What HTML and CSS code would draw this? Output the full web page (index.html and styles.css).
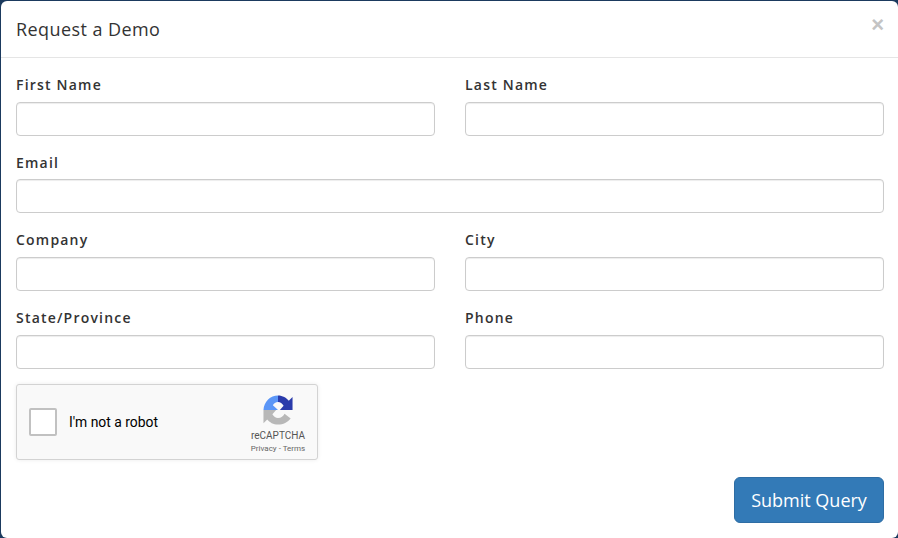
FILE: index.html
```html
<!DOCTYPE html>
<html lang="en">
<head>
    <meta charset="UTF-8">
    <meta name="viewport" content="width=device-width, initial-scale=1.0">
    <title>Request a Demo</title>
    <link rel="stylesheet" href="styles.css">
</head>
<body>
    <div class="modal">
        <div class="modal-header">
            <h4 class="modal-title">Request a Demo</h4>
            <button class="close" type="button">&times;</button>
        </div>

        <form class="modal-body">
            <div class="form-row">
                <div class="form-group">
                    <label for="firstName">First Name</label>
                    <input type="text" id="firstName">
                </div>
                <div class="form-group">
                    <label for="lastName">Last Name</label>
                    <input type="text" id="lastName">
                </div>
            </div>

            <div class="form-row email-row">
                <div class="form-group">
                    <label for="email">Email</label>
                    <input type="email" id="email">
                </div>
            </div>

            <div class="form-row">
                <div class="form-group">
                    <label for="company">Company</label>
                    <input type="text" id="company">
                </div>
                <div class="form-group">
                    <label for="city">City</label>
                    <input type="text" id="city">
                </div>
            </div>

            <div class="form-row">
                <div class="form-group">
                    <label for="state">State/Province</label>
                    <input type="text" id="state">
                </div>
                <div class="form-group">
                    <label for="phone">Phone</label>
                    <input type="text" id="phone">
                </div>
            </div>

            <div class="captcha">
                <div class="captcha-box"></div>
                <span class="captcha-text">I'm not a robot</span>
                <div class="captcha-brand">
                    <svg class="captcha-logo" viewBox="0 0 32 32" width="30" height="30">
                        <!-- top left, light blue -->
                        <path fill="#5b96f7" d="M0.5 16 C1 7 8 0.5 16 0.5 L16 7.5 C13.5 7.5 11.5 9 10.5 11 L14 14 L16 16 Z"/>
                        <!-- top right, dark blue -->
                        <path fill="#2a3bab" d="M16 0.5 C21 0.5 25 3 27.5 6 L31.5 2 L31.5 16 L18 16 L22 11.5 C20.5 9 18.5 7.5 16 7.5 Z"/>
                        <!-- bottom, grey -->
                        <path fill="#b8b8b8" d="M0.5 16 L14 16 L10 20.5 C11.5 23 13.5 24.5 16 24.5 C19.5 24.5 21.5 22.5 23 20 L29.5 25 C26.5 29 21.5 31.5 16 31.5 C11 31.5 7 29 4.5 26 L0.5 30 Z"/>
                    </svg>
                    <span class="captcha-name">reCAPTCHA</span>
                    <span class="captcha-links">Privacy - Terms</span>
                </div>
            </div>

            <div class="form-actions">
                <button class="submit-btn" type="submit">Submit Query</button>
            </div>
        </form>
    </div>
</body>
</html>
```

FILE: styles.css
```css
* {
    margin: 0;
    padding: 0;
    box-sizing: border-box;
}

html, body {
    height: 100%;
}

body {
    background-color: #1b3a5e;
    font-family: "Open Sans", sans-serif;
    overflow: hidden;
    padding: 1px 0 0 1px;
}

.modal {
    background-color: white;
    border-radius: 6px;
    height: 537px;
    width: 897px;
}

.modal-header {
    display: flex;
    justify-content: space-between;
    height: 57px;
    padding: 15px 15px 0 15px;
    border-bottom: 1px solid #e5e5e5;
}

.modal-title {
    color: #333;
    font-size: 18px;
    font-weight: 400;
    line-height: 26px;
    letter-spacing: 0.42px;
}

.close {
    background: none;
    border: none;
    color: #c4c4c4;
    font-family: "Liberation Sans", sans-serif;
    font-size: 22px;
    font-weight: bold;
    line-height: 20px;
    height: 20px;
    margin-top: -1px;
    margin-right: -1px;
}

.modal-body {
    padding: 16.7px 14px 0 15px;
}

.form-row {
    display: flex;
    gap: 30px;
}

.form-group {
    flex: 1;
    margin-bottom: 16.67px;
}

label {
    display: block;
    color: #333;
    font-size: 14px;
    font-weight: 600;
    line-height: 20px;
    letter-spacing: 1.2px;
    margin-bottom: 7px;
}

.email-row label {
    padding-top: 0.5px;
    margin-bottom: 6.5px;
    line-height: 20px;
    height: 20.5px;
}

input {
    display: block;
    width: 100%;
    height: 34px;
    border: 1px solid #ccc;
    border-radius: 4px;
    box-shadow: inset 0 1px 1px rgba(0, 0, 0, 0.075);
}

.captcha {
    display: flex;
    align-items: center;
    width: 302px;
    height: 76px;
    margin-top: -1px;
    background-color: #f9f9f9;
    border: 1px solid #d3d3d3;
    border-radius: 3px;
    box-shadow: 0 0 4px rgba(0, 0, 0, 0.08);
    font-family: Roboto, sans-serif;
}

.captcha-box {
    width: 28px;
    height: 28px;
    margin-left: 12px;
    background-color: white;
    border: 2px solid #c1c1c1;
    border-radius: 2px;
}

.captcha-text {
    color: #000;
    font-size: 13.9px;
    margin-left: 12px;
}

.captcha-brand {
    display: flex;
    flex-direction: column;
    align-items: center;
    margin-left: auto;
    width: 70px;
    margin-right: 4px;
    padding-top: 4px;
    color: #555;
}

.captcha-logo {
    display: block;
}

.captcha-name {
    font-size: 10px;
    line-height: 12px;
    margin-top: 5px;
}

.captcha-links {
    font-size: 8px;
    line-height: 10px;
    margin-top: 2px;
    color: #666;
}

.form-actions {
    display: flex;
    justify-content: flex-end;
    margin-top: 17px;
}

.submit-btn {
    background-color: #337ab7;
    color: white;
    border: 1px solid #2e6da4;
    border-radius: 6px;
    font-family: "Open Sans", sans-serif;
    font-size: 18px;
    line-height: 24px;
    width: 150px;
    height: 46px;
}
```
